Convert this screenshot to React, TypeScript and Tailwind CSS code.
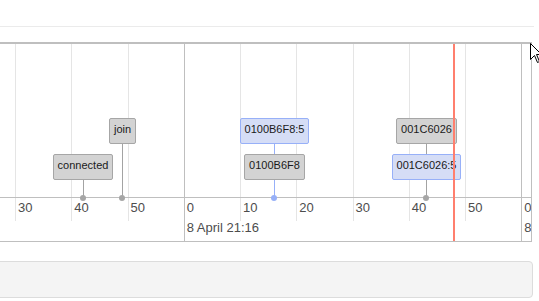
// one cell per 10 s tick, the first one starts off-screen to the left
const TICKS = [
  { label: "", major: false },
  { label: "30", major: false },
  { label: "40", major: false },
  { label: "50", major: false },
  { label: "0", major: true },
  { label: "10", major: false },
  { label: "20", major: false },
  { label: "30", major: false },
  { label: "40", major: false },
  { label: "50", major: false },
  { label: "0", major: true },
]

// row 0 = upper line of boxes, row 1 = lower
const ITEMS = [
  { text: "join", x: 109, w: 27, row: 0, blue: false },
  { text: "connected", x: 53, w: 60, row: 1, blue: false },
  { text: "0100B6F8:5", x: 240, w: 69, row: 0, blue: true },
  { text: "0100B6F8", x: 244, w: 61, row: 1, blue: false },
  { text: "001C6026", x: 396, w: 61, row: 0, blue: false },
  { text: "001C6026:5", x: 392, w: 69, row: 1, blue: true },
]

const STEMS = [
  { x: 122, top: 100, blue: false },
  { x: 83, top: 136, blue: false },
  { x: 274, top: 100, blue: true },
  { x: 426, top: 100, blue: false },
]

function Cursor() {
  return (
    <svg className="absolute left-[530px] top-[43px]" width="13" height="21" viewBox="0 0 13 21">
      <path d="M0.5 0.5 L0.5 16.5 L4.5 12.5 L7.5 19.5 L9.5 18.5 L6.5 11.5 L11.5 11.5 Z" fill="#fff" stroke="#000" strokeWidth="1" />
    </svg>
  )
}

export default function App() {
  return (
    <div className="relative h-[301px] w-[539px] overflow-hidden bg-white font-['Liberation_Sans',Arial,sans-serif]">
      <div className="h-[27px] w-[534px] border-b border-[#ebebeb]" />

      <div className="relative mt-[15px] flex h-[200px] w-[532px] flex-col overflow-hidden border-t-2 border-r border-b border-[#bfbfbf]">
        {/* center panel */}
        <div className="relative z-10 h-[153px]">
          <div className="absolute inset-0 ml-[-41.25px] flex">
            {TICKS.map((t, i) => (
              <div
                key={i}
                className={t.major ? "h-full w-[56.25px] shrink-0 border-l border-[#bfbfbf]" : "h-full w-[56.25px] shrink-0 border-l border-[#e5e5e5]"}
              />
            ))}
          </div>

          {STEMS.map((s) => (
            <div
              key={s.x}
              className={s.blue ? "absolute w-px bg-[#97b0f8]" : "absolute w-px bg-[#a3a3a3]"}
              style={{ left: s.x, top: s.top, height: 153 - s.top }}
            />
          ))}

          {ITEMS.map((it) => (
            <div
              key={it.text}
              className={
                it.blue
                  ? "absolute h-[26px] rounded-[2px] border border-[#97b0f8] bg-[#d5ddf6] pt-[3px] text-center text-[11px] leading-[14px] whitespace-nowrap text-[#1a1a1a]"
                  : "absolute h-[26px] rounded-[2px] border border-[#a6a6a6] bg-[#d3d3d3] pt-[3px] text-center text-[11px] leading-[14px] whitespace-nowrap text-[#1a1a1a]"
              }
              style={{ left: it.x, top: it.row === 0 ? 74 : 110, width: it.w }}
            >
              {it.text}
            </div>
          ))}

          {STEMS.map((s) => (
            <div
              key={"dot" + s.x}
              className={
                s.blue
                  ? "absolute top-[151px] h-[6px] w-[6px] rounded-full bg-[#97b0f8]"
                  : "absolute top-[151px] h-[6px] w-[6px] rounded-full bg-[#a6a6a6]"
              }
              style={{ left: s.x - 3 }}
            />
          ))}
        </div>

        {/* time axis */}
        <div className="ml-[-41.25px] flex flex-1 border-t border-[#bfbfbf] text-[13px] leading-[16px] text-[#4d4d4d]">
          {TICKS.map((t, i) =>
            t.major ? (
              <div key={i} className="h-full w-[56.25px] shrink-0 border-l border-[#bfbfbf] pt-[2px] pl-[2px] whitespace-nowrap">
                <div>{t.label}</div>
                <div className="mt-[4px]">8 April 21:16</div>
              </div>
            ) : (
              <div key={i} className="w-[56.25px] shrink-0">
                <div className="h-[23px] border-l border-[#e5e5e5] pt-[2px] pl-[2px] whitespace-nowrap">{t.label}</div>
              </div>
            )
          )}
        </div>

        {/* current time */}
        <div className="absolute top-0 bottom-0 left-[453px] z-20 w-[2px] bg-[#ff7f6e]" />
      </div>

      <div className="mt-[19px] ml-[-6px] h-[37px] w-[539px] rounded-[4px] border border-[#dcdcdc] bg-[#f4f4f4]" />

      <Cursor />
    </div>
  )
}
